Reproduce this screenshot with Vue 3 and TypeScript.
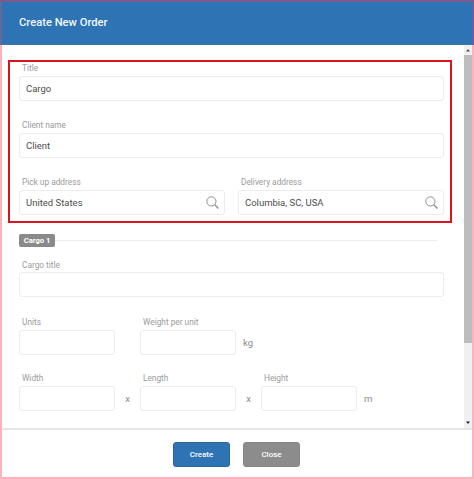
<script setup lang="ts">
const addresses = [
  { label: 'Pick up address', value: 'United States' },
  { label: 'Delivery address', value: 'Columbia, SC, USA' },
]
</script>

<template>
  <div class="frame">
    <div class="modal">
      <header class="head"><span class="head-text">Create New Order</span></header>
      <div class="pane">
        <main class="content">
          <section class="marked">
            <div class="field">
              <label>Title</label>
              <div class="input">Cargo</div>
            </div>
            <div class="field">
              <label>Client name</label>
              <div class="input">Client</div>
            </div>
            <div class="two">
              <div v-for="a in addresses" :key="a.label" class="field">
                <label>{{ a.label }}</label>
                <div class="input search">
                  <span>{{ a.value }}</span>
                  <svg width="13" height="13" viewBox="0 0 13 13" fill="none" stroke="#8f8f8f" stroke-width="1">
                    <circle cx="5.4" cy="5.4" r="4.6" />
                    <path d="M8.8 8.8 L12.4 12.4" stroke-width="1.4" />
                  </svg>
                </div>
              </div>
            </div>
          </section>
          <div class="cargo">
            <div class="sep"><span class="badge">Cargo 1</span><i></i></div>
            <div class="field">
              <label>Cargo title</label>
              <div class="input"></div>
            </div>
            <div class="row">
              <div class="field small"><label>Units</label><div class="input"></div></div>
              <span class="gapx"></span>
              <div class="field small"><label>Weight per unit</label><div class="input"></div></div>
              <span class="unit">kg</span>
            </div>
            <div class="row">
              <div class="field small"><label>Width</label><div class="input"></div></div>
              <span class="gapx">x</span>
              <div class="field small"><label>Length</label><div class="input"></div></div>
              <span class="gapx">x</span>
              <div class="field small"><label>Height</label><div class="input"></div></div>
              <span class="unit">m</span>
            </div>
          </div>
        </main>
        <aside class="bar">
          <svg class="arrow" width="8" height="10" viewBox="0 0 8 10"><path d="M2 6.5h4L4 4z" fill="#555" /></svg>
          <div class="track"><div class="thumb"></div></div>
          <svg class="arrow" width="8" height="10" viewBox="0 0 8 10"><path d="M2 3.5h4L4 6z" fill="#222" /></svg>
        </aside>
      </div>
      <footer class="foot">
        <button class="btn primary">Create</button>
        <button class="btn muted">Close</button>
      </footer>
    </div>
  </div>
</template>

<style>
html, body { margin: 0; padding: 0; }
</style>

<style scoped>
.frame {
  width: 474px;
  height: 479px;
  box-sizing: border-box;
  padding: 2px;
  background: #fdb4b9;
  font-family: Roboto, "Liberation Sans", sans-serif;
  overflow: hidden;
}
.modal {
  height: 100%;
  display: flex;
  flex-direction: column;
  background: #fff;
}
.head {
  height: 43px;
  margin: 0 -2px;
  padding-left: 17px;
  padding-bottom: 2px;
  box-sizing: border-box;
  flex: none;
  display: flex;
  align-items: center;
  background: #2e74b5;
  border-bottom: 1px solid #44719f;
  border-left: 2px solid #5f6a9c;
  border-right: 2px solid #6c5f96;
  color: #f2f7fb;
  font-size: 11.2px;
  font-weight: 500;
  box-shadow: 0 -2px 0 #7b5a8c;
}
.pane {
  flex: 1;
  display: flex;
  min-height: 0;
}
.content {
  flex: 1;
  min-width: 0;
  overflow: hidden;
  padding: 15px 0 0 6px;
}
.marked {
  width: 444px;
  box-sizing: border-box;
  border: 2px solid #d8141f;
  padding: 0 6px 6px 9px;
  display: flex;
  flex-direction: column;
  gap: 18px;
}
.field {
  display: flex;
  flex-direction: column;
}
label {
  height: 12px;
  line-height: 12px;
  margin-bottom: 2px;
  padding-left: 3px;
  font-size: 8.3px;
  color: #9b9b9b;
}
.input {
  height: 25px;
  box-sizing: border-box;
  border: 1px solid #ececec;
  border-radius: 3px;
  padding: 0 6px;
  display: flex;
  align-items: center;
  font-size: 9.5px;
  color: #4d4d4d;
  background: #fff;
}
.search {
  justify-content: space-between;
  padding-right: 5px;
}
.two {
  display: grid;
  grid-template-columns: 206px 206px;
  gap: 13px;
}
.cargo {
  width: 425px;
  padding: 11px 0 0 11px;
}
.sep {
  display: flex;
  align-items: center;
  width: 418px;
  margin-bottom: 12px;
}
.sep i {
  flex: 1;
  height: 1px;
  background: #ececec;
}
.badge {
  width: 36px;
  height: 13px;
  line-height: 13px;
  text-align: center;
  border-radius: 2px;
  background: #8a8a8a;
  color: #fff;
  font-size: 7.6px;
  font-weight: 700;
}
.cargo > .field label {
  margin-bottom: 1px;
}
.row {
  display: flex;
  align-items: flex-end;
  margin-top: 19px;
}
.row + .row {
  margin-top: 17px;
}
.small {
  width: 96px;
}
.gapx {
  width: 25px;
  height: 25px;
  line-height: 25px;
  text-align: center;
  font-size: 9.5px;
  color: #8c8c8c;
}
.unit {
  height: 25px;
  line-height: 25px;
  margin-left: 7px;
  font-size: 9.5px;
  color: #8c8c8c;
}
.bar {
  width: 8px;
  flex: none;
  display: flex;
  flex-direction: column;
  background: #f0f0f0;
}
.arrow {
  flex: none;
  display: block;
}
.track {
  flex: 1;
}
.thumb {
  height: 288px;
  background: #bdbdbd;
}
.foot {
  flex: none;
  height: 49px;
  box-sizing: border-box;
  border-top: 2px solid #e6e6e6;
  display: flex;
  justify-content: center;
  align-items: center;
  gap: 13px;
  padding: 2px 1px 0 0;
}
.btn {
  width: 57px;
  height: 25px;
  border-radius: 3px;
  border: 1px solid transparent;
  color: #fff;
  font-family: inherit;
  font-size: 8px;
  font-weight: 500;
  padding: 0;
}
.primary {
  background: #2e74b5;
  border-color: #2b6699;
}
.muted {
  background: #8c8c8c;
  border-color: #868686;
}
</style>
